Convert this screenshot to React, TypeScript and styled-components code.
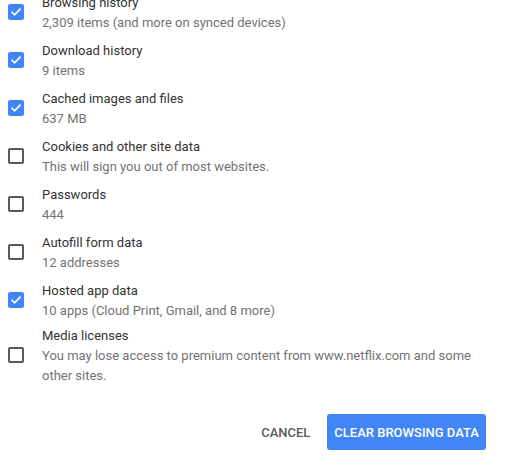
import React from 'react';
import styled, { createGlobalStyle } from 'styled-components';

const GlobalStyle = createGlobalStyle`
  html, body {
    margin: 0;
    padding: 0;
    background: #ffffff;
    overflow: hidden;
  }
  body {
    font-family: Roboto, "Liberation Sans", Arial, sans-serif;
  }
`;

const Dialog = styled.div`
  width: 530px;
  height: 458px;
  box-sizing: border-box;
  padding: 0 44px 0 8px;
  display: flex;
  flex-direction: column;
`;

const List = styled.div`
  display: flex;
  flex-direction: column;
  margin-top: -12px;
`;

const Row = styled.label`
  display: flex;
  align-items: center;
  min-height: 48px;
  gap: 18px;
  cursor: pointer;
`;

const Box = styled.span<{ checked: boolean }>`
  flex: none;
  width: 16px;
  height: 16px;
  box-sizing: border-box;
  border-radius: 2px;
  display: flex;
  align-items: center;
  justify-content: center;
  background: ${({ checked }) => (checked ? '#4285f4' : 'transparent')};
  border: ${({ checked }) => (checked ? 'none' : '2px solid #5a5a5a')};
`;

const Texts = styled.div`
  display: flex;
  flex-direction: column;
  padding-top: 2px;
  font-size: 13px;
  line-height: 20px;
`;

const Title = styled.div`
  color: #333333;
`;

const Sub = styled.div`
  color: #737373;
`;

const Actions = styled.div`
  display: flex;
  justify-content: flex-end;
  align-items: center;
  margin-top: 28px;
  gap: 1px;
`;

const Button = styled.button<{ primary?: boolean }>`
  height: 36px;
  border: none;
  border-radius: 3px;
  font-family: Roboto, "Liberation Sans", Arial, sans-serif;
  font-size: 13px;
  font-weight: 500;
  letter-spacing: 0;
  padding: 0 ${({ primary }) => (primary ? '7px' : '16px')};
  background: ${({ primary }) => (primary ? '#4285f4' : 'transparent')};
  color: ${({ primary }) => (primary ? '#ffffff' : '#5a5a5a')};
  text-transform: uppercase;
  cursor: pointer;
`;

const Check = () => (
  <svg width="12" height="12" viewBox="0 0 24 24" fill="none">
    <path d="M4 12.5l5 5L20 6.5" stroke="#fff" strokeWidth="3.4" strokeLinecap="square" />
  </svg>
);

const items = [
  { title: 'Browsing history', sub: ['2,309 items (and more on synced devices)'], checked: true },
  { title: 'Download history', sub: ['9 items'], checked: true },
  { title: 'Cached images and files', sub: ['637 MB'], checked: true },
  { title: 'Cookies and other site data', sub: ['This will sign you out of most websites.'], checked: false },
  { title: 'Passwords', sub: ['444'], checked: false },
  { title: 'Autofill form data', sub: ['12 addresses'], checked: false },
  { title: 'Hosted app data', sub: ['10 apps (Cloud Print, Gmail, and 8 more)'], checked: true },
  {
    title: 'Media licenses',
    sub: ['You may lose access to premium content from www.netflix.com and some', 'other sites.'],
    checked: false
  }
];

export default function App() {
  return (
    <>
      <GlobalStyle />
      <Dialog>
        <List>
          {items.map((it) => (
            <Row key={it.title}>
              <Box checked={it.checked}>{it.checked && <Check />}</Box>
              <Texts>
                <Title>{it.title}</Title>
                {it.sub.map((s) => (
                  <Sub key={s}>{s}</Sub>
                ))}
              </Texts>
            </Row>
          ))}
        </List>
        <Actions>
          <Button>Cancel</Button>
          <Button primary>Clear browsing data</Button>
        </Actions>
      </Dialog>
    </>
  );
}
